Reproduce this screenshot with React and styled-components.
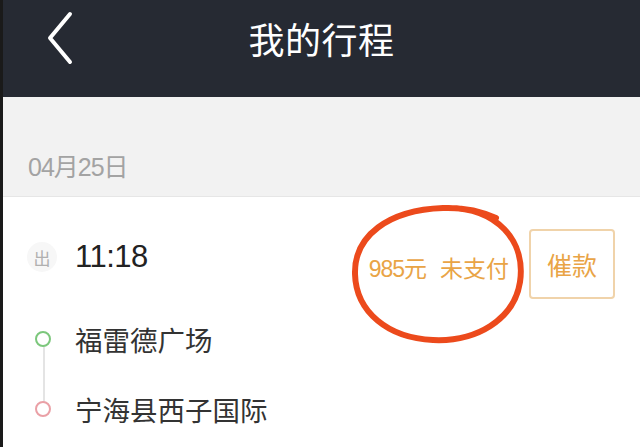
import React from "react";
import styled, { createGlobalStyle } from "styled-components";

const GlobalStyle = createGlobalStyle`
  body {
    margin: 0;
    background: #ffffff;
    font-family: "Noto Sans CJK SC", "Noto Sans", sans-serif;
  }
`;

const Screen = styled.div`
  width: 640px;
  height: 447px;
  overflow: hidden;
  position: relative;
  background: #fff;
  border-left: 3px solid #1a1a1a;
  box-sizing: border-box;
`;

const NavBar = styled.div`
  height: 97px;
  background: #262a33;
  display: grid;
  grid-template-columns: 1fr auto 1fr;
  align-items: center;
  padding: 0 0 22px 0;
  box-sizing: border-box;
`;

const BackButton = styled.div`
  padding-left: 40px;
  display: flex;
  align-items: center;
`;

const Title = styled.h1`
  margin: 0;
  color: #fff;
  font-size: 36px;
  font-weight: 400;
  letter-spacing: 0.5px;
`;

const DateBand = styled.div`
  height: 100px;
  background: #f2f2f2;
  border-bottom: 1px solid #e6e6e6;
  display: flex;
  align-items: flex-end;
  padding: 0 0 13px 25px;
  box-sizing: border-box;
  color: #a3a3a3;
  font-size: 25px;
  font-family: "Liberation Sans", "Noto Sans CJK SC", sans-serif;
  letter-spacing: -1px;
`;

const Card = styled.div`
  position: relative;
  padding: 32px 25px 0 24px;
`;

const TripRow = styled.div`
  display: flex;
  justify-content: space-between;
  align-items: flex-start;
`;

const Depart = styled.div`
  display: flex;
  align-items: center;
  gap: 18px;
  margin-top: 10px;
`;

const Badge = styled.span`
  width: 30px;
  height: 30px;
  border-radius: 50%;
  background: #f7f7f7;
  color: #b0b0b0;
  font-size: 17px;
  display: flex;
  align-items: center;
  justify-content: center;
`;

const Time = styled.span`
  font-family: "Liberation Sans", sans-serif;
  font-size: 31px;
  color: #222;
  letter-spacing: -0.5px;
`;

const Actions = styled.div`
  display: flex;
  align-items: center;
  gap: 20px;
`;

const Price = styled.span`
  color: #e9a446;
  font-size: 23px;
  display: flex;
  gap: 14px;
  margin-top: 6px;
  span:first-child {
    font-family: "Liberation Sans", "Noto Sans CJK SC", sans-serif;
    letter-spacing: -1px;
  }
`;

const RemindButton = styled.button`
  width: 86px;
  height: 70px;
  border: 2px solid #f0d3aa;
  border-radius: 4px;
  background: #fff;
  color: #e9a446;
  font-family: "Noto Sans CJK SC", sans-serif;
  font-size: 25px;
  padding: 0;
`;

const Stops = styled.div`
  position: relative;
  margin-top: 20px;
  display: flex;
  flex-direction: column;
  gap: 30px;
`;

const Line = styled.div`
  position: absolute;
  left: 16px;
  top: 24px;
  bottom: 22px;
  width: 2px;
  background: #e4e4e4;
`;

const Stop = styled.div`
  display: flex;
  align-items: center;
  gap: 24px;
  height: 40px;
  color: #333;
  font-size: 27.5px;
  position: relative;
`;

const Dot = styled.span`
  width: 12px;
  height: 12px;
  border-radius: 50%;
  border: 2px solid ${(p) => p.$color};
  background: #fff;
  margin-left: 8px;
  flex: none;
`;

const Annotation = styled.svg`
  position: absolute;
  left: 345px;
  top: 202px;
  pointer-events: none;
`;

export default function App() {
  return (
    <Screen>
      <GlobalStyle />
      <NavBar>
        <BackButton>
          <svg width="34" height="56" viewBox="0 0 34 56">
            <path d="M27 4 L7 28 L27 52" fill="none" stroke="#fff" strokeWidth="4" strokeLinecap="round" strokeLinejoin="round" />
          </svg>
        </BackButton>
        <Title>我的行程</Title>
        <div />
      </NavBar>
      <DateBand>04月25日</DateBand>
      <Card>
        <TripRow>
          <Depart>
            <Badge>出</Badge>
            <Time>11:18</Time>
          </Depart>
          <Actions>
            <Price>
              <span>985元</span>
              <span>未支付</span>
            </Price>
            <RemindButton>催款</RemindButton>
          </Actions>
        </TripRow>
        <Stops>
          <Line />
          <Stop>
            <Dot $color="#7cc77c" />
            福雷德广场
          </Stop>
          <Stop>
            <Dot $color="#eaa0a6" />
            宁海县西子国际
          </Stop>
        </Stops>
      </Card>
      <Annotation width="185" height="145" viewBox="0 0 185 145">
        <path
          d="M95 6 C150 4 178 40 172 80 C166 118 128 140 85 138 C40 136 8 110 7 72 C6 34 40 8 95 6 C118 5 135 10 148 16"
          fill="none"
          stroke="#ec4a1c"
          strokeWidth="6"
          strokeLinecap="round"
        />
      </Annotation>
    </Screen>
  );
}
